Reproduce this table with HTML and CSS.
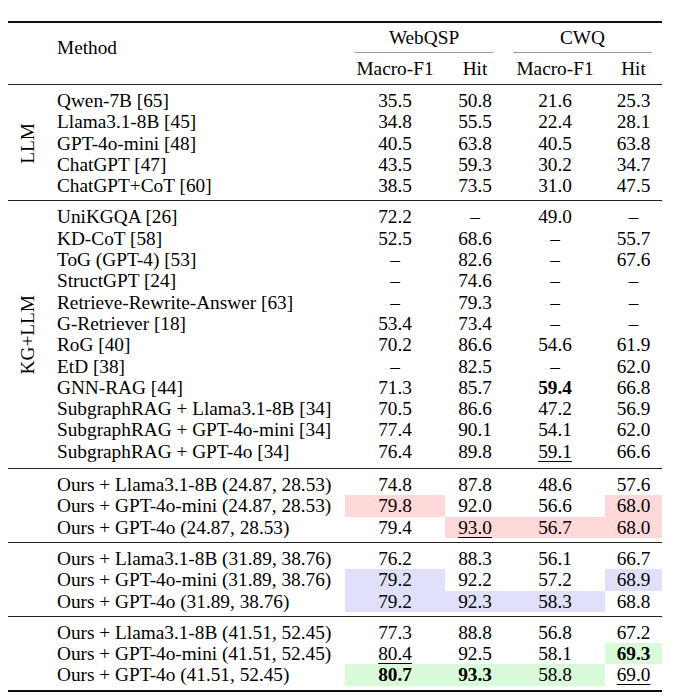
FILE: index.html
```html
<!DOCTYPE html>
<html>
<head>
<meta charset="utf-8">
<link rel="stylesheet" href="styles.css">
</head>
<body>
<div class="tbl">
  <div class="head">
    <div class="h-method">Method</div>
    <div class="h-group g1">WebQSP</div>
    <div class="h-group g2">CWQ</div>
    <div class="h-sub c3">Macro-F1</div>
    <div class="h-sub c4">Hit</div>
    <div class="h-sub c5">Macro-F1</div>
    <div class="h-sub c6">Hit</div>
  </div>

  <div class="block">
    <div class="label span5"><span class="vt">LLM</span></div>
    <div class="m">Qwen-7B [65]</div><div class="n">35.5</div><div class="n">50.8</div><div class="n">21.6</div><div class="n">25.3</div>
    <div class="m">Llama3.1-8B [45]</div><div class="n">34.8</div><div class="n">55.5</div><div class="n">22.4</div><div class="n">28.1</div>
    <div class="m">GPT-4o-mini [48]</div><div class="n">40.5</div><div class="n">63.8</div><div class="n">40.5</div><div class="n">63.8</div>
    <div class="m">ChatGPT [47]</div><div class="n">43.5</div><div class="n">59.3</div><div class="n">30.2</div><div class="n">34.7</div>
    <div class="m">ChatGPT+CoT [60]</div><div class="n">38.5</div><div class="n">73.5</div><div class="n">31.0</div><div class="n">47.5</div>
  </div>

  <div class="block kg">
    <div class="label span12"><span class="vt">KG+LLM</span></div>
    <div class="m">UniKGQA [26]</div><div class="n">72.2</div><div class="n">–</div><div class="n">49.0</div><div class="n">–</div>
    <div class="m">KD-CoT [58]</div><div class="n">52.5</div><div class="n">68.6</div><div class="n">–</div><div class="n">55.7</div>
    <div class="m">ToG (GPT-4) [53]</div><div class="n">–</div><div class="n">82.6</div><div class="n">–</div><div class="n">67.6</div>
    <div class="m">StructGPT [24]</div><div class="n">–</div><div class="n">74.6</div><div class="n">–</div><div class="n">–</div>
    <div class="m">Retrieve-Rewrite-Answer [63]</div><div class="n">–</div><div class="n">79.3</div><div class="n">–</div><div class="n">–</div>
    <div class="m">G-Retriever [18]</div><div class="n">53.4</div><div class="n">73.4</div><div class="n">–</div><div class="n">–</div>
    <div class="m">RoG [40]</div><div class="n">70.2</div><div class="n">86.6</div><div class="n">54.6</div><div class="n">61.9</div>
    <div class="m">EtD [38]</div><div class="n">–</div><div class="n">82.5</div><div class="n">–</div><div class="n">62.0</div>
    <div class="m">GNN-RAG [44]</div><div class="n">71.3</div><div class="n">85.7</div><div class="n"><b>59.4</b></div><div class="n">66.8</div>
    <div class="m">SubgraphRAG + Llama3.1-8B [34]</div><div class="n">70.5</div><div class="n">86.6</div><div class="n">47.2</div><div class="n">56.9</div>
    <div class="m">SubgraphRAG + GPT-4o-mini [34]</div><div class="n">77.4</div><div class="n">90.1</div><div class="n">54.1</div><div class="n">62.0</div>
    <div class="m">SubgraphRAG + GPT-4o [34]</div><div class="n">76.4</div><div class="n">89.8</div><div class="n"><u>59.1</u></div><div class="n">66.6</div>
  </div>

  <div class="block">
    <div class="m">Ours + Llama3.1-8B (24.87, 28.53)</div><div class="n">74.8</div><div class="n">87.8</div><div class="n">48.6</div><div class="n">57.6</div>
    <div class="m">Ours + GPT-4o-mini (24.87, 28.53)</div><div class="n pk">79.8</div><div class="n">92.0</div><div class="n">56.6</div><div class="n pk">68.0</div>
    <div class="m">Ours + GPT-4o (24.87, 28.53)</div><div class="n">79.4</div><div class="n pk"><u>93.0</u></div><div class="n pk">56.7</div><div class="n pk">68.0</div>
  </div>

  <div class="block">
    <div class="m">Ours + Llama3.1-8B (31.89, 38.76)</div><div class="n">76.2</div><div class="n">88.3</div><div class="n">56.1</div><div class="n">66.7</div>
    <div class="m">Ours + GPT-4o-mini (31.89, 38.76)</div><div class="n bl">79.2</div><div class="n">92.2</div><div class="n">57.2</div><div class="n bl">68.9</div>
    <div class="m">Ours + GPT-4o (31.89, 38.76)</div><div class="n bl">79.2</div><div class="n bl">92.3</div><div class="n bl">58.3</div><div class="n">68.8</div>
  </div>

  <div class="block last">
    <div class="m">Ours + Llama3.1-8B (41.51, 52.45)</div><div class="n">77.3</div><div class="n">88.8</div><div class="n">56.8</div><div class="n">67.2</div>
    <div class="m">Ours + GPT-4o-mini (41.51, 52.45)</div><div class="n"><u>80.4</u></div><div class="n">92.5</div><div class="n">58.1</div><div class="n gr"><b>69.3</b></div>
    <div class="m">Ours + GPT-4o (41.51, 52.45)</div><div class="n gr"><b>80.7</b></div><div class="n gr"><b>93.3</b></div><div class="n gr">58.8</div><div class="n"><u>69.0</u></div>
  </div>
</div>
</body>
</html>
```

FILE: styles.css
```css
html, body {
  margin: 0;
  padding: 0;
  background: #ffffff;
}

body {
  font-family: "Liberation Serif", "Times New Roman", serif;
  font-size: 19.3px;
  color: #000000;
}

.tbl {
  width: 654px;
  margin: 21px 0 0 8px;
  border-top: 2px solid #111111;
  border-bottom: 2px solid #111111;
}

.head,
.block {
  display: grid;
  grid-template-columns: 37px 300px 100px 60px 100px 57px;
}

.head {
  grid-template-rows: 30px 31px;
  line-height: 21.3px;
}

.h-method {
  grid-column: 2;
  grid-row: 1 / span 2;
  padding: 14px 0 0 12px;
}

.h-group {
  grid-row: 1;
  text-align: center;
  padding-top: 4px;
  border-bottom: 1px solid #9a9a9a;
}

.g1 {
  grid-column: 3 / span 2;
  margin: 0 12px 0 10px;
}

.g2 {
  grid-column: 5 / span 2;
  margin: 0 10px 0 8px;
}

.h-sub {
  grid-row: 2;
  text-align: center;
  padding-top: 5px;
}

.c3 { grid-column: 3; }
.c4 { grid-column: 4; }
.c5 { grid-column: 5; }
.c6 { grid-column: 6; }

.block {
  grid-auto-rows: 21.3px;
  line-height: 21.3px;
  padding: 5px 0 4px;
  border-top: 1px solid #222222;
}

.block.kg {
  padding-bottom: 6px;
}

.label {
  grid-column: 1;
  display: flex;
  align-items: center;
  justify-content: center;
  padding-left: 3px;
}

.span5 { grid-row: 1 / span 5; }
.span12 { grid-row: 1 / span 12; }

.vt {
  writing-mode: vertical-rl;
  transform: rotate(180deg);
  line-height: 1;
}

.m {
  grid-column: 2;
  padding-left: 12px;
  white-space: nowrap;
}

.n {
  text-align: center;
  white-space: nowrap;
}

.n u {
  text-decoration: underline;
  text-decoration-thickness: 1px;
  text-underline-offset: 3px;
}

.pk { background: #ffd9d9; }
.bl { background: #e0e0fb; }
.gr { background: #d9fbd9; }
```
